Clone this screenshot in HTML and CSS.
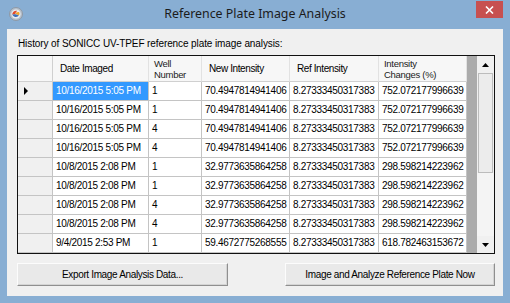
FILE: index.html
```html
<!DOCTYPE html>
<html>
<head>
<meta charset="utf-8">
<link rel="stylesheet" href="styles.css">
</head>
<body>
<div class="window">
  <div class="titlebar">
    <div class="tb-left">
      <svg class="app-icon" width="14" height="14" viewBox="0 0 14 14">
        <circle cx="7" cy="7" r="6.5" fill="#b9c2cc" stroke="#8d99a6" stroke-width="1"/>
        <circle cx="7" cy="7" r="4.6" fill="#e8ecf0"/>
        <path d="M3.2 7.4 C3.4 4.6 6 3.2 8.4 3.9 C7 4.6 6.2 5.8 6.4 7.2 Z" fill="#e24a2b"/>
        <path d="M6.4 7.2 C6.6 5.6 8.2 4.6 10.2 5.2 C10.8 6.4 10.6 7.6 9.8 8.6 C8.6 7.6 7.4 7.2 6.4 7.2 Z" fill="#f2a52b"/>
        <path d="M3.2 7.4 L6.4 7.2 C7.6 7.4 8.8 8 9.8 8.6 C8.6 10.4 5.2 10.8 3.2 7.4 Z" fill="#3d6fb8"/>
      </svg>
    </div>
    <div class="title">Reference Plate Image Analysis</div>
    <div class="tb-right">
      <div class="close">
        <svg width="9" height="8" viewBox="0 0 9 8"><path d="M1 0.5 L8 7.5 M8 0.5 L1 7.5" stroke="#fff" stroke-width="1.6"/></svg>
      </div>
    </div>
  </div>
  <div class="client">
    <div class="caption">History of SONICC UV-TPEF reference plate image analysis:</div>
    <div class="grid">
      <div class="cells">
        <div class="ch corner"></div>
        <div class="ch">Date Imaged</div>
        <div class="ch two">Well<br>Number</div>
        <div class="ch">New Intensity</div>
        <div class="ch">Ref Intensity</div>
        <div class="ch two">Intensity<br>Changes (%)</div>

        <div class="rh"><span class="arrow"></span></div>
        <div class="c sel">10/16/2015 5:05 PM</div><div class="c">1</div><div class="c">70.4947814941406</div><div class="c">8.27333450317383</div><div class="c">752.072177996639</div>

        <div class="rh"></div>
        <div class="c">10/16/2015 5:05 PM</div><div class="c">1</div><div class="c">70.4947814941406</div><div class="c">8.27333450317383</div><div class="c">752.072177996639</div>

        <div class="rh"></div>
        <div class="c">10/16/2015 5:05 PM</div><div class="c">4</div><div class="c">70.4947814941406</div><div class="c">8.27333450317383</div><div class="c">752.072177996639</div>

        <div class="rh"></div>
        <div class="c">10/16/2015 5:05 PM</div><div class="c">4</div><div class="c">70.4947814941406</div><div class="c">8.27333450317383</div><div class="c">752.072177996639</div>

        <div class="rh"></div>
        <div class="c">10/8/2015 2:08 PM</div><div class="c">1</div><div class="c">32.9773635864258</div><div class="c">8.27333450317383</div><div class="c">298.598214223962</div>

        <div class="rh"></div>
        <div class="c">10/8/2015 2:08 PM</div><div class="c">1</div><div class="c">32.9773635864258</div><div class="c">8.27333450317383</div><div class="c">298.598214223962</div>

        <div class="rh"></div>
        <div class="c">10/8/2015 2:08 PM</div><div class="c">4</div><div class="c">32.9773635864258</div><div class="c">8.27333450317383</div><div class="c">298.598214223962</div>

        <div class="rh"></div>
        <div class="c">10/8/2015 2:08 PM</div><div class="c">4</div><div class="c">32.9773635864258</div><div class="c">8.27333450317383</div><div class="c">298.598214223962</div>

        <div class="rh"></div>
        <div class="c">9/4/2015 2:53 PM</div><div class="c">1</div><div class="c">59.4672775268555</div><div class="c">8.27333450317383</div><div class="c">618.782463153672</div>
      </div>
      <div class="filler"></div>
      <div class="vscroll">
        <div class="sb-btn"><svg width="7" height="4" viewBox="0 0 7 4"><path d="M3.5 0 L7 4 L0 4 Z" fill="#000"/></svg></div>
        <div class="sb-thumb"></div>
        <div class="sb-track"></div>
        <div class="sb-btn"><svg width="7" height="4" viewBox="0 0 7 4"><path d="M0 0 L7 0 L3.5 4 Z" fill="#000"/></svg></div>
      </div>
    </div>
    <div class="buttons">
      <button class="btn btn-export">Export Image Analysis Data...</button>
      <button class="btn btn-run">Image and Analyze Reference Plate Now</button>
    </div>
  </div>
</div>
</body>
</html>
```

FILE: styles.css
```css
html, body {
  margin: 0;
  padding: 0;
}
body {
  width: 510px;
  height: 303px;
  overflow: hidden;
  font-family: "Liberation Sans", Arial, sans-serif;
}
.window {
  box-sizing: border-box;
  width: 510px;
  height: 303px;
  background: #88aed3;
  display: flex;
  flex-direction: column;
  padding: 0 7px 7px 7px;
}
.titlebar {
  height: 29px;
  flex: none;
  display: grid;
  grid-template-columns: 1fr auto 1fr;
  align-items: start;
}
.tb-left {
  padding-top: 7px;
  padding-left: 2px;
  display: flex;
}
.app-icon {
  display: block;
}
.title {
  font-family: "Noto Sans", "Open Sans", sans-serif;
  font-size: 12.4px;
  line-height: 18px;
  padding-top: 5px;
  color: #1b1b1b;
}
.tb-right {
  display: flex;
  justify-content: flex-end;
  padding-top: 1px;
}
.close {
  width: 27px;
  height: 17px;
  background: #c75050;
  display: flex;
  align-items: center;
  justify-content: center;
}
.close svg {
  display: block;
}
.client {
  flex: 1;
  background: #f0f0f0;
  display: flex;
  flex-direction: column;
  padding: 0 8px 0 10px;
}
.caption {
  font-size: 10px;
  letter-spacing: -0.1px;
  line-height: 13px;
  padding: 8px 0 0 1px;
  height: 18px;
  color: #000;
}
.grid {
  height: 199px;
  box-sizing: border-box;
  border: 1px solid #111;
  display: flex;
  background: #ababab;
  overflow: hidden;
}
.cells {
  display: grid;
  grid-template-columns: 35px 96px 53px 88px 89px 88px;
  grid-template-rows: 26px repeat(9, 19px);
  font-size: 10px;
  letter-spacing: -0.3px;
  color: #000;
  flex: none;
}
.cells > div {
  box-sizing: border-box;
  border-right: 1px solid #c4c4c4;
  border-bottom: 1px solid #c4c4c4;
  white-space: nowrap;
  overflow: hidden;
}
.ch {
  background: #f7f7f7;
  display: flex;
  align-items: center;
  padding-left: 7px;
  font-size: 10px;
  letter-spacing: -0.4px;
  border-right-color: #e2e2e2 !important;
  border-bottom-color: #d0d0d0 !important;
}
.ch.two {
  line-height: 11px;
  padding-left: 5px;
  font-size: 9.5px;
  letter-spacing: -0.3px;
  color: #222;
}
.ch.corner {
  border-right-color: #d0d0d0 !important;
}
.rh {
  background: #f0f0f0;
  display: flex;
  align-items: center;
  padding-left: 6px;
}
.arrow {
  width: 0;
  height: 0;
  border-top: 4px solid transparent;
  border-bottom: 4px solid transparent;
  border-left: 4px solid #000;
}
.c {
  background: #fff;
  line-height: 18px;
  padding-left: 3px;
}
.c.sel {
  background: #3399ff;
  color: #fff;
}
.filler {
  flex: 1;
  background: #ababab;
}
.vscroll {
  width: 17px;
  flex: none;
  display: flex;
  flex-direction: column;
  background: #f0f0f0;
}
.sb-btn {
  height: 17px;
  flex: none;
  box-sizing: border-box;
  background: #f0f0f0;
  display: flex;
  align-items: center;
  justify-content: center;
}
.sb-btn svg {
  display: block;
}
.sb-thumb {
  height: 100px;
  flex: none;
  box-sizing: border-box;
  background: #ececec;
  border: 1px solid #bcbcbc;
  margin: 0 1px 0 1px;
}
.sb-track {
  flex: 1;
  background: #f4f4f4;
}
.buttons {
  display: flex;
  justify-content: space-between;
  margin-top: 9px;
}
.btn {
  height: 23px;
  box-sizing: border-box;
  font-family: "Liberation Sans", Arial, sans-serif;
  font-size: 10px;
  letter-spacing: -0.35px;
  color: #000;
  background: #e9e9e9;
  border: 1px solid;
  border-color: #fcfcfc #8f8f8f #8f8f8f #fcfcfc;
  box-shadow: inset -1px -1px 0 #d4d4d4;
  padding: 0;
  margin: 0;
}
.btn-export {
  width: 211px;
}
.btn-run {
  width: 210px;
}
```
